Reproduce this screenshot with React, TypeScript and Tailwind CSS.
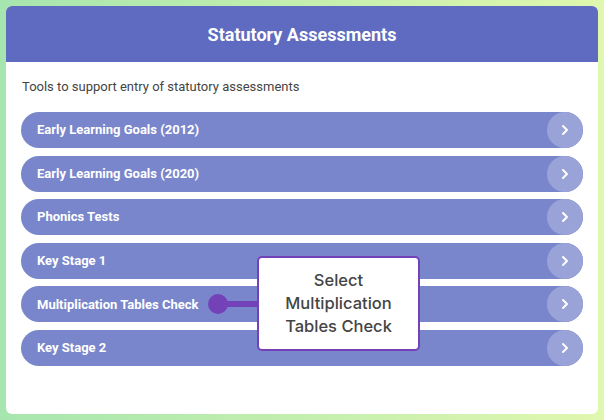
import React from "react";

const items = [
  "Early Learning Goals (2012)",
  "Early Learning Goals (2020)",
  "Phonics Tests",
  "Key Stage 1",
  "Multiplication Tables Check",
  "Key Stage 2",
];

function Chevron() {
  return (
    <svg width="16" height="16" viewBox="0 0 24 24" fill="none" stroke="white" strokeWidth="3" strokeLinecap="round" strokeLinejoin="round">
      <path d="M9 6l6 6-6 6" />
    </svg>
  );
}

export default function App() {
  return (
    <div className="w-[604px] h-[420px] p-[6px] bg-gradient-to-r from-[#a6e6ae] to-[#e0f7ae]" style={{ fontFamily: "Roboto, sans-serif" }}>
      <div className="w-full h-full bg-white rounded-[6px] overflow-hidden flex flex-col relative">
        <div className="h-[56px] bg-[#5e6bc0] flex items-center justify-center shrink-0">
          <span className="text-white font-bold text-[18px]">Statutory Assessments</span>
        </div>
        <div className="px-[15px] pt-[17px]">
          <p className="text-[13px] text-[#444] pl-[1px] leading-[16px]">Tools to support entry of statutory assessments</p>
          <div className="mt-[17px] flex flex-col gap-[7.6px]">
            {items.map((t) => (
              <div key={t} className="h-[36px] rounded-full bg-[#7986cb] flex items-center justify-between">
                <span className="pl-[16px] text-white font-bold text-[13px]">{t}</span>
                <span className="w-[36px] h-[36px] rounded-full bg-[#9aa3d8] flex items-center justify-center">
                  <Chevron />
                </span>
              </div>
            ))}
          </div>
        </div>
        <div className="absolute left-[202px] top-[288px] w-[20px] h-[20px] rounded-full bg-[#7442b8]" />
        <div className="absolute left-[212px] top-[295px] w-[42px] h-[6px] bg-[#7442b8]" />
        <div className="absolute left-[251px] top-[250px] w-[163px] h-[95px] bg-white border-2 border-[#7442b8] rounded-[5px] flex items-center justify-center text-center">
          <span className="text-[16.5px] leading-[23px] text-[#444] font-medium" style={{ fontFamily: "Inter, sans-serif" }}>
            Select
            <br />
            Multiplication
            <br />
            Tables Check
          </span>
        </div>
      </div>
    </div>
  );
}
